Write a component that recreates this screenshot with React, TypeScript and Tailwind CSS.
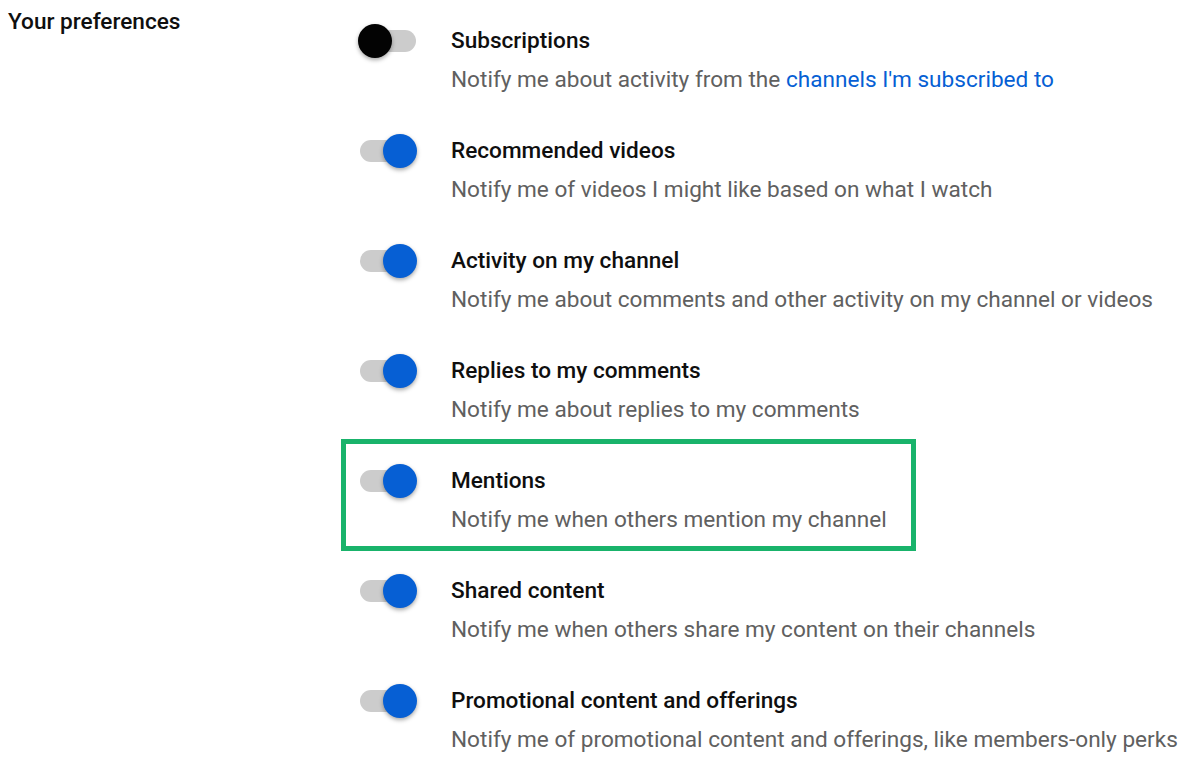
import React from "react";

type Pref = {
  title: string;
  desc: React.ReactNode;
  on: boolean;
  highlight?: boolean;
};

const PREFS: Pref[] = [
  {
    title: "Subscriptions",
    desc: (
      <>
        Notify me about activity from the{" "}
        <span className="text-[#065fd4]">channels I'm subscribed to</span>
      </>
    ),
    on: false,
  },
  { title: "Recommended videos", desc: "Notify me of videos I might like based on what I watch", on: true },
  { title: "Activity on my channel", desc: "Notify me about comments and other activity on my channel or videos", on: true },
  { title: "Replies to my comments", desc: "Notify me about replies to my comments", on: true },
  { title: "Mentions", desc: "Notify me when others mention my channel", on: true, highlight: true },
  { title: "Shared content", desc: "Notify me when others share my content on their channels", on: true },
  { title: "Promotional content and offerings", desc: "Notify me of promotional content and offerings, like members-only perks", on: true },
];

function Toggle({ on }: { on: boolean }) {
  return (
    <div className="relative w-[59px] h-[34px] flex items-center">
      <div className="ml-[2px] w-[56px] h-[22px] rounded-full bg-[#cccccc]" />
      <div
        className={
          "absolute top-0 w-[34px] h-[34px] rounded-full shadow-[0_2px_4px_rgba(0,0,0,0.35)] " +
          (on ? "left-[25px] bg-[#065fd4]" : "left-0 bg-[#030303]")
        }
      />
    </div>
  );
}

export default function App() {
  return (
    <div
      className="w-[1200px] h-[770px] bg-white flex overflow-hidden"
      style={{ fontFamily: "Roboto, 'Liberation Sans', sans-serif" }}
    >
      {/* Section label */}
      <div className="w-[358px] pl-[8px] pt-[8px]">
        <h2 className="text-[22.6px] leading-[28px] font-medium text-[#0f0f0f]">Your preferences</h2>
      </div>

      {/* Toggles */}
      <div className="flex flex-col gap-[43px] pt-[27px]">
        {PREFS.map((p) => (
          <div key={p.title} className="relative flex">
            <div className="w-[93px] shrink-0 -mt-[3px]">
              <Toggle on={p.on} />
            </div>
            <div className="flex flex-col gap-[11px]">
              <div className="text-[22.6px] leading-[28px] font-medium text-[#0f0f0f]">{p.title}</div>
              <div className="text-[22.6px] leading-[28px] text-[#606060] whitespace-nowrap">{p.desc}</div>
            </div>
            {p.highlight && (
              <div className="absolute left-[-17px] top-[-28px] w-[575px] h-[112px] border-[5px] border-[#19b36b] pointer-events-none" />
            )}
          </div>
        ))}
      </div>
    </div>
  );
}
